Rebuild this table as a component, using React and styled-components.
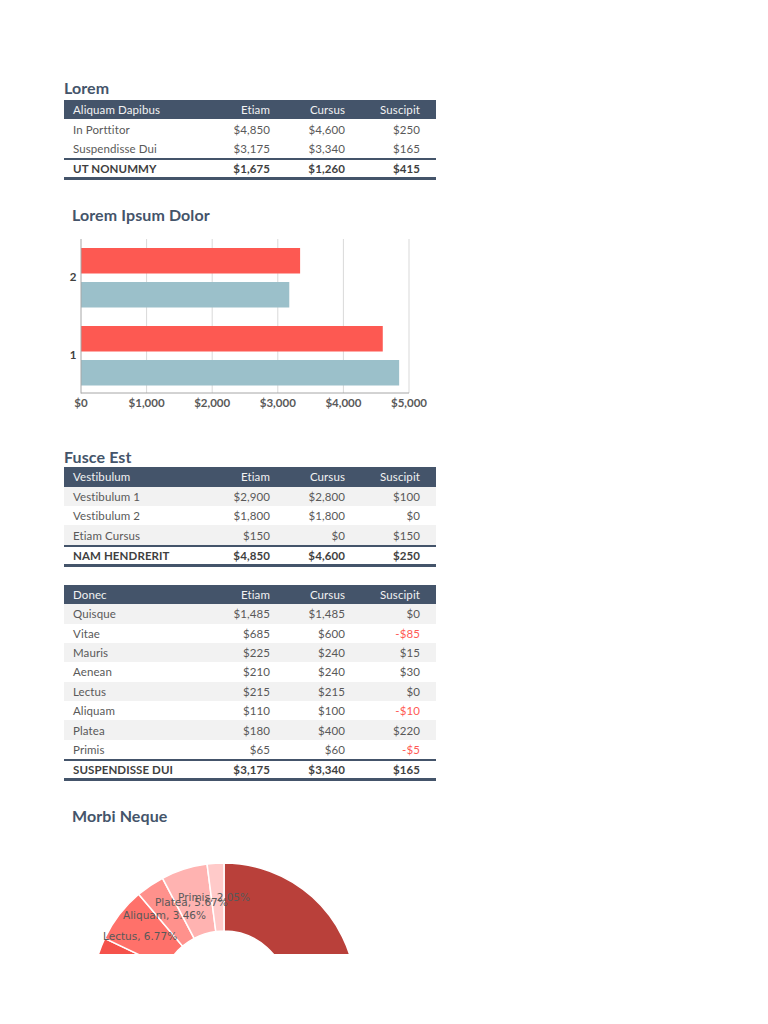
import React from 'react';
import styled, { createGlobalStyle } from 'styled-components';

const GlobalStyle = createGlobalStyle`
  body {
    margin: 0;
    background: #ffffff;
    font-family: Lato, "Open Sans", "Liberation Sans", sans-serif;
  }
`;

const SLATE = '#44546a';

const lorem = {
  head: ['Aliquam Dapibus', 'Etiam', 'Cursus', 'Suscipit'],
  rows: [
    ['In Porttitor', '$4,850', '$4,600', '$250'],
    ['Suspendisse Dui', '$3,175', '$3,340', '$165'],
  ],
  total: ['UT NONUMMY', '$1,675', '$1,260', '$415'],
};

const fusce = {
  head: ['Vestibulum', 'Etiam', 'Cursus', 'Suscipit'],
  rows: [
    ['Vestibulum 1', '$2,900', '$2,800', '$100'],
    ['Vestibulum 2', '$1,800', '$1,800', '$0'],
    ['Etiam Cursus', '$150', '$0', '$150'],
  ],
  total: ['NAM HENDRERIT', '$4,850', '$4,600', '$250'],
};

const donec = {
  head: ['Donec', 'Etiam', 'Cursus', 'Suscipit'],
  rows: [
    ['Quisque', '$1,485', '$1,485', '$0'],
    ['Vitae', '$685', '$600', '-$85'],
    ['Mauris', '$225', '$240', '$15'],
    ['Aenean', '$210', '$240', '$30'],
    ['Lectus', '$215', '$215', '$0'],
    ['Aliquam', '$110', '$100', '-$10'],
    ['Platea', '$180', '$400', '$220'],
    ['Primis', '$65', '$60', '-$5'],
  ],
  total: ['SUSPENDISSE DUI', '$3,175', '$3,340', '$165'],
};

const Page = styled.div`
  padding: 78px 0 0 64px;
  display: flex;
  flex-direction: column;
  align-items: flex-start;
  height: 955px;
  overflow: hidden;
  box-sizing: border-box;
`;

const Title = styled.h2`
  margin: ${(p) => p.$top || 0}px 0 0 ${(p) => (p.$indent ? 8 : 0)}px;
  font-size: 16px;
  line-height: 20px;
  font-weight: 700;
  letter-spacing: 0.1px;
  color: ${SLATE};
`;

const Table = styled.div`
  width: 372px;
  margin-top: ${(p) => p.$top || 0}px;
  font-size: 11.5px;
  letter-spacing: 0.1px;
`;

const Line = styled.div`
  display: grid;
  grid-template-columns: 1fr 75px 75px 75px;
  align-items: center;
  padding: 0 16px 0 9px;
  height: 19.4px;
  box-sizing: border-box;
  color: #595959;
  background: ${(p) => (p.$shade ? '#f2f2f2' : '#ffffff')};
`;

const HeadLine = styled(Line)`
  background: ${SLATE};
  color: #f2f2f2;
`;

const TotalLine = styled(Line)`
  height: 22px;
  border-top: 2px solid ${SLATE};
  border-bottom: 3px solid ${SLATE};
  font-weight: 700;
  color: #3f3f3f;
`;

const Cell = styled.span`
  text-align: ${(p) => (p.$first ? 'left' : 'right')};
  white-space: nowrap;
  color: ${(p) => (p.$neg ? '#ff5a55' : 'inherit')};
`;

const DataTable = ({ data, top, striped }) => (
  <Table $top={top}>
    <HeadLine>
      {data.head.map((h, i) => (
        <Cell key={h} $first={i === 0}>{h}</Cell>
      ))}
    </HeadLine>
    {data.rows.map((r, ri) => (
      <Line key={r[0]} $shade={striped && ri % 2 === 0}>
        {r.map((c, i) => (
          <Cell key={i} $first={i === 0} $neg={c.startsWith('-')}>{c}</Cell>
        ))}
      </Line>
    ))}
    <TotalLine>
      {data.total.map((c, i) => (
        <Cell key={i} $first={i === 0}>{c}</Cell>
      ))}
    </TotalLine>
  </Table>
);

const ChartSvg = styled.svg`
  display: block;
  margin-top: ${(p) => p.$top || 0}px;
  font-family: Lato, "Open Sans", sans-serif;
`;

const BarChart = () => {
  const x0 = 17;
  const per = 65.6;
  const bars = [
    { y: 19, v: 3340, c: '#fd5952' },
    { y: 53, v: 3175, c: '#9bc0ca' },
    { y: 97, v: 4600, c: '#fd5952' },
    { y: 131, v: 4850, c: '#9bc0ca' },
  ];
  return (
    <ChartSvg width="380" height="185" $top={4}>
      {[1, 2, 3, 4, 5].map((k) => (
        <line key={k} x1={x0 + k * per} x2={x0 + k * per} y1="10" y2="164" stroke="#d9d9d9" strokeWidth="1" />
      ))}
      {bars.map((b) => (
        <rect key={b.y} x={x0} y={b.y} width={(b.v / 1000) * per} height="25.5" fill={b.c} />
      ))}
      <line x1={x0} x2={x0} y1="10" y2="164.5" stroke="#a6a6a6" strokeWidth="1" />
      <line x1={x0} x2={x0 + 5 * per} y1="164" y2="164" stroke="#a6a6a6" strokeWidth="1" />
      <g fill="#404040" fontSize="11.5" fontWeight="700" textAnchor="middle">
        <text x="9" y="52">2</text>
        <text x="9" y="130">1</text>
      </g>
      <g fill="#595959" fontSize="11.5" fontWeight="700" textAnchor="middle">
        {['$0', '$1,000', '$2,000', '$3,000', '$4,000', '$5,000'].map((t, k) => (
          <text key={t} x={x0 + k * per} y="178">{t}</text>
        ))}
      </g>
    </ChartSvg>
  );
};

const slices = [
  { v: 1485, c: '#b9403a' },
  { v: 685, c: '#d9463f' },
  { v: 225, c: '#e84c45' },
  { v: 210, c: '#f5524b' },
  { v: 215, c: '#ff716a' },
  { v: 110, c: '#ff918c' },
  { v: 180, c: '#ffb3b1' },
  { v: 65, c: '#ffcac9' },
];

const arcPath = (cx, cy, R, r, a0, a1) => {
  const pt = (rad, a) => [cx + rad * Math.sin(a), cy - rad * Math.cos(a)];
  const large = a1 - a0 > Math.PI ? 1 : 0;
  const [x1, y1] = pt(R, a0);
  const [x2, y2] = pt(R, a1);
  const [x3, y3] = pt(r, a1);
  const [x4, y4] = pt(r, a0);
  return `M${x1} ${y1} A${R} ${R} 0 ${large} 1 ${x2} ${y2} L${x3} ${y3} A${r} ${r} 0 ${large} 0 ${x4} ${y4} Z`;
};

const Donut = () => {
  const total = slices.reduce((s, d) => s + d.v, 0);
  let acc = 0;
  const paths = slices.map((s) => {
    const a0 = (acc / total) * Math.PI * 2;
    acc += s.v;
    const a1 = (acc / total) * Math.PI * 2;
    return { d: arcPath(160, 166, 132, 64, a0, a1), c: s.c };
  });
  return (
    <ChartSvg width="380" height="125" $top={3}>
      {paths.map((p, i) => (
        <path key={i} d={p.d} fill={p.c} stroke="#ffffff" strokeWidth="1.5" />
      ))}
      <g fill="#595959" fontSize="10.5" fontFamily='"DejaVu Sans", sans-serif'>
        <text x="114" y="72">Primis, 2.05%</text>
        <text x="91" y="77">Platea, 5.67%</text>
        <text x="59" y="90">Aliquam, 3.46%</text>
        <text x="39" y="111">Lectus, 6.77%</text>
      </g>
    </ChartSvg>
  );
};

const App = () => (
  <>
    <GlobalStyle />
    <Page>
      <Title>Lorem</Title>
      <DataTable data={lorem} top={2} />
      <Title $indent $top={25}>Lorem Ipsum Dolor</Title>
      <BarChart />
      <Title $top={33}>Fusce Est</Title>
      <DataTable data={fusce} striped />
      <DataTable data={donec} striped top={18} />
      <Title $indent $top={25}>Morbi Neque</Title>
      <Donut />
    </Page>
  </>
);

export default App;
